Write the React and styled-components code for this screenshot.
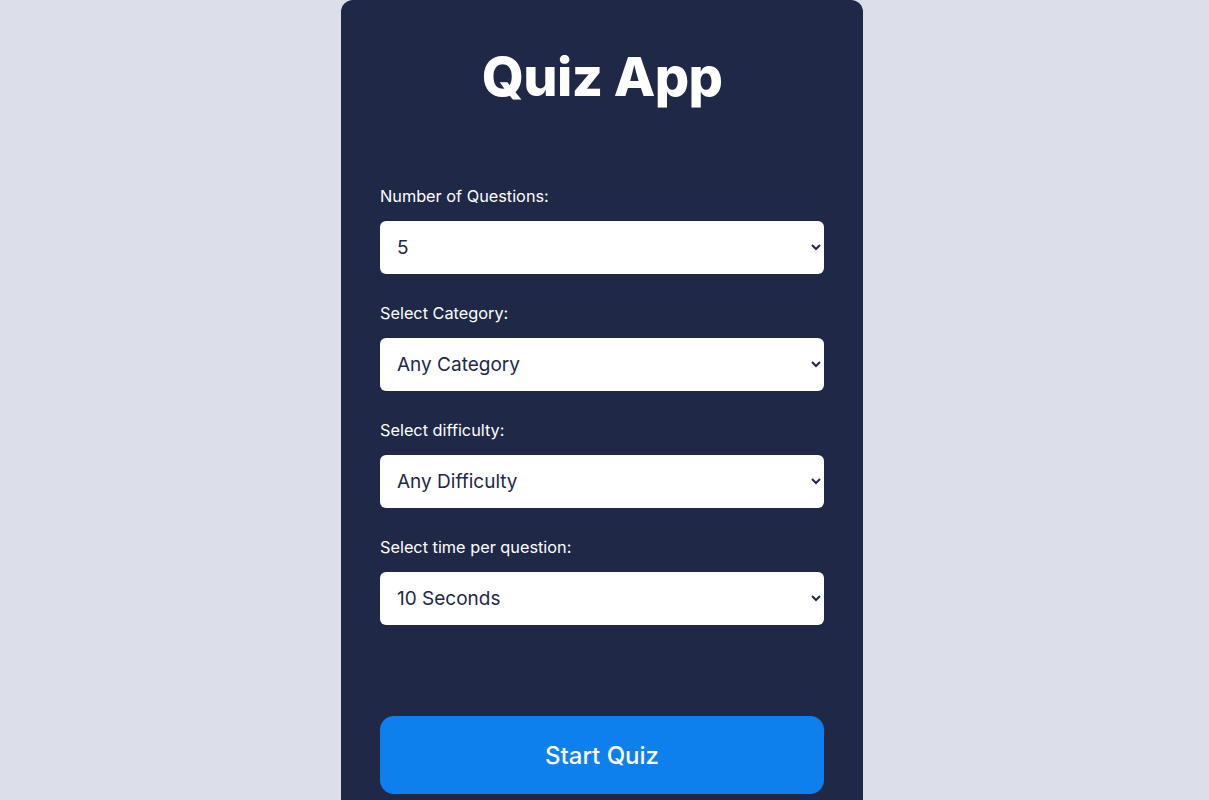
import React, { useState } from "react";
import styled, { createGlobalStyle } from "styled-components";

const GlobalStyle = createGlobalStyle`
  * { box-sizing: border-box; }
  body {
    margin: 0;
    background: #dcdfea;
    font-family: "Inter", "Noto Sans", sans-serif;
  }
`;

const Page = styled.div`
  display: flex;
  justify-content: center;
  min-height: 100vh;
`;

const Card = styled.div`
  width: 522px;
  margin-left: -5px;
  background: #1f2847;
  border-radius: 12px 12px 0 0;
  padding: 44px 39px 40px;
  display: flex;
  flex-direction: column;
`;

const Title = styled.h1`
  margin: 0 0 75px;
  text-align: center;
  color: #ffffff;
  font-size: 54px;
  font-weight: 800;
  letter-spacing: -0.6px;
  line-height: 66px;
`;

const Field = styled.div`
  display: flex;
  flex-direction: column;
  gap: 14px;
  margin-bottom: 28px;
`;

const Label = styled.label`
  color: #ffffff;
  font-size: 16.3px;
  line-height: 22px;
`;

const Select = styled.select`
  height: 53px;
  width: 100%;
  border: none;
  border-radius: 6px;
  background: #ffffff;
  color: #1f2847;
  font-family: "Inter", "Noto Sans", sans-serif;
  font-size: 19px;
  padding: 0 5px 0 13px;
  outline: none;
`;

const StartButton = styled.button`
  margin-top: 63px;
  height: 78px;
  width: 100%;
  border: none;
  border-radius: 14px;
  background: #0d80ee;
  color: #ffffff;
  font-family: "Inter", "Noto Sans", sans-serif;
  font-size: 24px;
  font-weight: 500;
  cursor: pointer;
`;

const fields = [
  { id: "amount", label: "Number of Questions:", options: ["5", "10", "15", "20"] },
  { id: "category", label: "Select Category:", options: ["Any Category", "General Knowledge", "Science", "History"] },
  { id: "difficulty", label: "Select difficulty:", options: ["Any Difficulty", "Easy", "Medium", "Hard"] },
  { id: "time", label: "Select time per question:", options: ["10 Seconds", "15 Seconds", "20 Seconds", "30 Seconds"] },
];

export default function App() {
  const [values, setValues] = useState(
    Object.fromEntries(fields.map((f) => [f.id, f.options[0]]))
  );

  return (
    <Page>
      <GlobalStyle />
      <Card>
        <Title>Quiz App</Title>
        {fields.map((f) => (
          <Field key={f.id}>
            <Label htmlFor={f.id}>{f.label}</Label>
            <Select
              id={f.id}
              value={values[f.id]}
              onChange={(e) => setValues({ ...values, [f.id]: e.target.value })}
            >
              {f.options.map((o) => (
                <option key={o}>{o}</option>
              ))}
            </Select>
          </Field>
        ))}
        <StartButton>Start Quiz</StartButton>
      </Card>
    </Page>
  );
}
